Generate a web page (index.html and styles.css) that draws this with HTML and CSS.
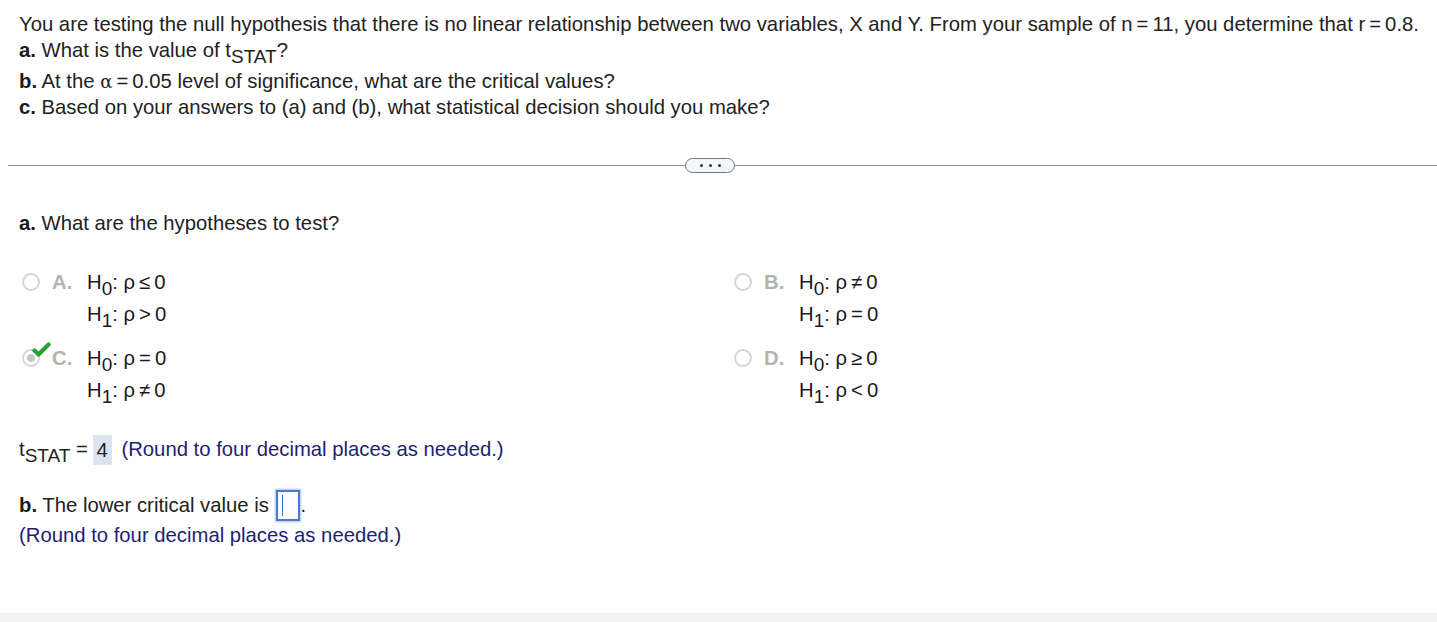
FILE: index.html
```html
<!DOCTYPE html>
<html>
<head>
<meta charset="utf-8">
<link rel="stylesheet" href="styles.css">
</head>
<body>
<div class="page">
  <div class="question">
    <p class="q-line">You are testing the null hypothesis that there is no linear relationship between two variables, X and Y. From your sample of n&thinsp;=&thinsp;11, you determine that r&thinsp;=&thinsp;0.8.</p>
    <p class="q-line"><b>a.</b> What is the value of t<sub>STAT</sub>?</p>
    <p class="q-line"><b>b.</b> At the <span class="alpha">α</span>&thinsp;=&thinsp;0.05 level of significance, what are the critical values?</p>
    <p class="q-line"><b>c.</b> Based on your answers to (a) and (b), what statistical decision should you make?</p>
  </div>

  <div class="divider">
    <span class="pill"><i></i><i></i><i></i></span>
  </div>

  <div class="answer">
    <p class="sub-q"><b>a.</b> What are the hypotheses to test?</p>

    <div class="options">
      <div class="option">
        <span class="radio"></span>
        <span class="opt-label">A.</span>
        <div class="hyp">
          <div>H<sub>0</sub>: ρ&thinsp;≤&thinsp;0</div>
          <div>H<sub>1</sub>: ρ&thinsp;&gt;&thinsp;0</div>
        </div>
      </div>
      <div class="option">
        <span class="radio"></span>
        <span class="opt-label">B.</span>
        <div class="hyp">
          <div>H<sub>0</sub>: ρ&thinsp;≠&thinsp;0</div>
          <div>H<sub>1</sub>: ρ&thinsp;=&thinsp;0</div>
        </div>
      </div>
      <div class="option">
        <span class="radio checked">
          <svg class="check" viewBox="0 0 20 16" width="20" height="16"><path d="M3.5 8.5 L7.5 12.5 L17.5 2.5" fill="none" stroke="#26a02f" stroke-width="4.2" stroke-linecap="round" stroke-linejoin="round"/></svg>
        </span>
        <span class="opt-label">C.</span>
        <div class="hyp">
          <div>H<sub>0</sub>: ρ&thinsp;=&thinsp;0</div>
          <div>H<sub>1</sub>: ρ&thinsp;≠&thinsp;0</div>
        </div>
      </div>
      <div class="option">
        <span class="radio"></span>
        <span class="opt-label">D.</span>
        <div class="hyp">
          <div>H<sub>0</sub>: ρ&thinsp;≥&thinsp;0</div>
          <div>H<sub>1</sub>: ρ&thinsp;&lt;&thinsp;0</div>
        </div>
      </div>
    </div>

    <p class="tstat">t<sub>STAT</sub> = <span class="filled">4</span> <span class="hint">(Round to four decimal places as needed.)</span></p>

    <p class="sub-q lower"><b>b.</b> The lower critical value is <span class="input"><span class="caret"></span></span>.</p>
    <p class="hint">(Round to four decimal places as needed.)</p>
  </div>
</div>
<div class="footer-bar"></div>
</body>
</html>
```

FILE: styles.css
```css
html, body {
  margin: 0;
  padding: 0;
  background: #fff;
}
body {
  font-family: "Liberation Sans", Arial, sans-serif;
  font-size: 20.3px;
  color: #222;
  width: 1437px;
  height: 622px;
  overflow: hidden;
  position: relative;
}
p { margin: 0; }
b { font-weight: bold; color: #1a1a1a; }
sub {
  font-size: 19px;
  vertical-align: -6px;
  line-height: 0;
}
.page {
  padding: 11px 0 0 19px;
}
.question .q-line {
  line-height: 26px;
  height: 26px;
}
.question .q-line:nth-child(3) { margin-top: 5px; }
.alpha { font-family: "DejaVu Serif", serif; font-size: 18px; }

.divider {
  margin: 45px 0 0 -11px;
  height: 1px;
  background: #8a939c;
  position: relative;
}
.pill {
  position: absolute;
  left: 677px;
  top: -7px;
  width: 48px;
  height: 13px;
  border: 1px solid #6f7b88;
  border-radius: 8px;
  background: #f4f6f8;
  display: flex;
  justify-content: center;
  align-items: center;
  gap: 6px;
}
.pill i {
  width: 3px;
  height: 3px;
  background: #333;
  border-radius: 50%;
}

.answer { padding-top: 45px; }
.sub-q { line-height: 24px; }

.options {
  display: grid;
  grid-template-columns: 712px 1fr;
  row-gap: 12px;
  margin-top: 34px;
}
.option {
  display: flex;
  align-items: flex-start;
}
.radio {
  width: 18px;
  height: 18px;
  border: 2px solid #d4d4d4;
  border-radius: 50%;
  margin: 4px 0 0 3px;
  position: relative;
  flex: none;
  box-sizing: border-box;
}
.radio.checked::after {
  content: "";
  position: absolute;
  left: 3px;
  top: 3px;
  width: 8px;
  height: 8px;
  border-radius: 50%;
  background: #c6c6c6;
}
.check {
  position: absolute;
  left: 7px;
  top: -9px;
}
.opt-label {
  font-weight: bold;
  color: #b3b3b3;
  width: 35px;
  margin-left: 12px;
  line-height: 26px;
}
.hyp div {
  line-height: 26px;
  height: 32px;
  color: #1a1a1a;
}

.tstat {
  margin-top: 26px;
  line-height: 26px;
}
.filled {
  display: inline-block;
  background: #dce4f0;
  padding: 0 4px;
  margin: 0 4px 0 -1px;
  line-height: 30px;
  vertical-align: -1px;
}
.hint { color: #1d1f74; }
.lower {
  margin-top: 24px;
  line-height: 32px;
}
.input {
  display: inline-block;
  width: 20px;
  height: 27px;
  border: 2px solid #4a78d8;
  box-shadow: 0 0 2px 1px #a9c1ee;
  vertical-align: -9px;
  position: relative;
  margin-left: 2px;
}
.caret {
  position: absolute;
  left: 4px;
  top: 3px;
  width: 1px;
  height: 21px;
  background: #3b6fd6;
}
p.hint { line-height: 28px; }

.footer-bar {
  position: absolute;
  left: 0;
  right: 0;
  bottom: 0;
  height: 9px;
  background: #f2f2f2;
}
```
